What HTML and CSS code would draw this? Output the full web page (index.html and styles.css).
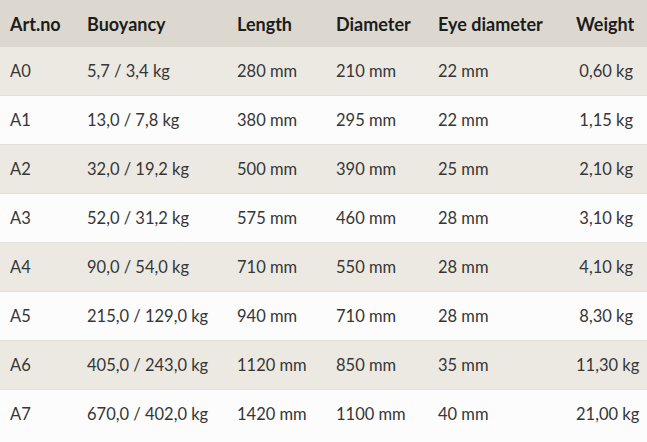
FILE: index.html
```html
<!DOCTYPE html>
<html>
<head>
<meta charset="utf-8">
<link rel="stylesheet" href="styles.css">
</head>
<body>
<table class="spec">
  <thead>
    <tr><th>Art.no</th><th>Buoyancy</th><th>Length</th><th>Diameter</th><th>Eye diameter</th><th class="r">Weight</th></tr>
  </thead>
  <tbody>
    <tr><td>A0</td><td>5,7 / 3,4 kg</td><td>280 mm</td><td>210 mm</td><td>22 mm</td><td class="r">0,60 kg</td></tr>
    <tr><td>A1</td><td>13,0 / 7,8 kg</td><td>380 mm</td><td>295 mm</td><td>22 mm</td><td class="r">1,15 kg</td></tr>
    <tr><td>A2</td><td>32,0 / 19,2 kg</td><td>500 mm</td><td>390 mm</td><td>25 mm</td><td class="r">2,10 kg</td></tr>
    <tr><td>A3</td><td>52,0 / 31,2 kg</td><td>575 mm</td><td>460 mm</td><td>28 mm</td><td class="r">3,10 kg</td></tr>
    <tr><td>A4</td><td>90,0 / 54,0 kg</td><td>710 mm</td><td>550 mm</td><td>28 mm</td><td class="r">4,10 kg</td></tr>
    <tr><td>A5</td><td>215,0 / 129,0 kg</td><td>940 mm</td><td>710 mm</td><td>28 mm</td><td class="r">8,30 kg</td></tr>
    <tr><td>A6</td><td>405,0 / 243,0 kg</td><td>1120 mm</td><td>850 mm</td><td>35 mm</td><td class="r">11,30 kg</td></tr>
    <tr><td>A7</td><td>670,0 / 402,0 kg</td><td>1420 mm</td><td>1100 mm</td><td>40 mm</td><td class="r">21,00 kg</td></tr>
  </tbody>
</table>
</body>
</html>
```
FILE: styles.css
```css
html, body {
  margin: 0;
  padding: 0;
  background: #fcfcfc;
}
.spec {
  width: 647px;
  border-collapse: collapse;
  table-layout: fixed;
  font-family: Lato, "Liberation Sans", sans-serif;
  font-size: 16.5px;
  color: #363636;
}
.spec th, .spec td {
  text-align: left;
  padding: 0 0 0 10px;
  white-space: nowrap;
}
.spec th {
  height: 47px;
  background: #dcd8d0;
  color: #1c1c1c;
  font-weight: bold;
  font-size: 18px;
}
.spec td {
  height: 48px;
  border-bottom: 1px solid #e2dfd8;
}
.spec tbody tr:nth-child(odd) td {
  background: #ece9e3;
}
.spec tbody tr:nth-child(even) td {
  background: #fcfcfc;
}
.spec tbody tr:last-child td {
  border-bottom: none;
}
.spec .r {
  text-align: right;
  padding-right: 14px;
}
.spec th:nth-child(1) { width: 67px; }
.spec th:nth-child(2) { width: 140px; }
.spec th:nth-child(3) { width: 89px; }
.spec th:nth-child(4) { width: 92px; }
.spec th:nth-child(5) { width: 128px; }
```
